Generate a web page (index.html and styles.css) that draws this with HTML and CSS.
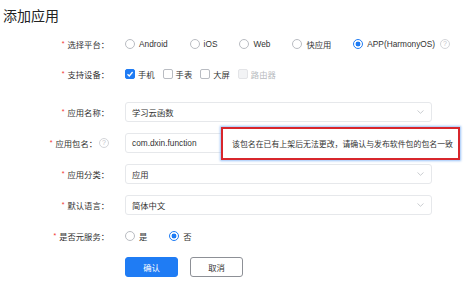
FILE: index.html
```html
<!DOCTYPE html>
<html lang="zh-CN">
<head>
<meta charset="utf-8">
<link rel="stylesheet" href="styles.css">
</head>
<body>
<h1 class="title">添加应用</h1>
<div class="form">
  <div class="row r1">
    <div class="label"><span class="req">*</span>选择平台：</div>
    <div class="control">
      <span class="radio"><span class="circle"></span>Android</span>
      <span class="radio"><span class="circle"></span>iOS</span>
      <span class="radio"><span class="circle"></span>Web</span>
      <span class="radio"><span class="circle"></span>快应用</span>
      <span class="radio on"><span class="circle"></span>APP(HarmonyOS)</span>
      <span class="help">?</span>
    </div>
  </div>
  <div class="row r2">
    <div class="label"><span class="req">*</span>支持设备：</div>
    <div class="control">
      <span class="check on"><span class="box"><svg width="8" height="8" viewBox="0 0 8 8"><polyline points="1.5,4.2 3.3,6 6.6,2" fill="none" stroke="#fff" stroke-width="1.3"/></svg></span>手机</span>
      <span class="check"><span class="box"></span>手表</span>
      <span class="check"><span class="box"></span>大屏</span>
      <span class="check off"><span class="box"></span>路由器</span>
    </div>
  </div>
  <div class="row">
    <div class="label"><span class="req">*</span>应用名称：</div>
    <div class="control">
      <div class="input"><span>学习云函数</span><svg class="chev" width="7" height="4" viewBox="0 0 7 4"><polyline points="0.5,0.5 3.5,3.3 6.5,0.5" fill="none" stroke="#c4c7cc" stroke-width="0.9"/></svg></div>
    </div>
  </div>
  <div class="row">
    <div class="label"><span class="req">*</span>应用包名：<span class="help lbl">?</span></div>
    <div class="control">
      <div class="input"><span>com.dxin.function</span></div>
    </div>
    <div class="tip">该包名在已有上架后无法更改，请确认与发布软件包的包名一致</div>
  </div>
  <div class="row">
    <div class="label"><span class="req">*</span>应用分类：</div>
    <div class="control">
      <div class="input"><span>应用</span><svg class="chev" width="7" height="4" viewBox="0 0 7 4"><polyline points="0.5,0.5 3.5,3.3 6.5,0.5" fill="none" stroke="#c4c7cc" stroke-width="0.9"/></svg></div>
    </div>
  </div>
  <div class="row">
    <div class="label"><span class="req">*</span>默认语言：</div>
    <div class="control">
      <div class="input"><span>简体中文</span><svg class="chev" width="7" height="4" viewBox="0 0 7 4"><polyline points="0.5,0.5 3.5,3.3 6.5,0.5" fill="none" stroke="#c4c7cc" stroke-width="0.9"/></svg></div>
    </div>
  </div>
  <div class="row">
    <div class="label"><span class="req">*</span>是否元服务：</div>
    <div class="control">
      <span class="radio"><span class="circle"></span>是</span>
      <span class="radio on"><span class="circle"></span>否</span>
    </div>
  </div>
  <div class="row">
    <div class="label"></div>
    <div class="control">
      <button class="btn primary">确认</button>
      <button class="btn">取消</button>
    </div>
  </div>
</div>
</body>
</html>
```
FILE: styles.css
```css
html, body {
  margin: 0;
  background: #fff;
}
body {
  width: 474px;
  height: 287px;
  overflow: hidden;
  font-family: "Liberation Sans", "Noto Sans CJK SC", sans-serif;
  color: #333;
}
.title {
  margin: 0;
  padding: 7px 0 0 3px;
  font-size: 14px;
  line-height: 18px;
  font-weight: normal;
  color: #222;
}
.form {
  margin-top: 9px;
  font-size: 8.3px;
}
.row {
  position: relative;
  display: flex;
  align-items: center;
  height: 20px;
  margin-bottom: 11px;
}
.row.r1 { margin-bottom: 10px; }
.row.r2 { margin-bottom: 18px; }
.label {
  flex: none;
  width: 109px;
  display: flex;
  justify-content: flex-end;
  align-items: center;
  color: #333;
}
.req {
  color: #f23030;
  margin-right: 3px;
  font-size: 7px;
  position: relative;
  top: -1px;
}
.control {
  margin-left: 16px;
  display: flex;
  align-items: center;
}
.radio {
  display: flex;
  align-items: center;
  margin-right: 22px;
}
.circle {
  width: 10px;
  height: 10px;
  box-sizing: border-box;
  border: 1px solid #b9bcc2;
  border-radius: 50%;
  margin-right: 4px;
  background: #fff;
}
.radio.on .circle {
  border-color: #1f7cf4;
  background: radial-gradient(circle, #1f7cf4 0 2.2px, #fff 2.7px);
}
.help {
  width: 10px;
  height: 10px;
  box-sizing: border-box;
  border: 1px solid #d3d5d9;
  border-radius: 50%;
  color: #c4c6ca;
  font-size: 7px;
  line-height: 8px;
  text-align: center;
  margin-left: -17px;
}
.help.lbl {
  margin-left: 2px;
}
.check {
  display: flex;
  align-items: center;
  margin-right: 8px;
}
.box {
  width: 10px;
  height: 10px;
  box-sizing: border-box;
  border: 1px solid #b9bcc2;
  border-radius: 2px;
  margin-right: 3px;
  display: flex;
  align-items: center;
  justify-content: center;
}
.check.on .box {
  background: #1f7cf4;
  border-color: #1f7cf4;
}
.check.off .box {
  background: #f2f3f5;
  border-color: #e3e4e7;
}
.check.off {
  color: #b8bbc0;
}
.input {
  width: 307px;
  height: 20px;
  box-sizing: border-box;
  border: 1px solid #e6e8eb;
  border-radius: 3px;
  padding: 0 7px 0 6px;
  display: flex;
  align-items: center;
  justify-content: space-between;
  color: #333;
}
.tip {
  position: absolute;
  left: 221px;
  top: -6px;
  width: 239px;
  height: 33px;
  box-sizing: border-box;
  border: 2px solid #d8262c;
  background: #fff;
  box-shadow: 0 0 2px 1px rgba(120, 175, 245, 0.75);
  padding-left: 9px;
  display: flex;
  align-items: center;
  font-size: 7.9px;
  color: #333;
}
.btn {
  width: 53px;
  height: 20px;
  box-sizing: border-box;
  border-radius: 3px;
  border: 1px solid #8d9096;
  background: #fff;
  color: #333;
  font-family: inherit;
  font-size: 8.3px;
  padding: 0;
  margin-right: 12px;
}
.btn.primary {
  background: #1f7cf4;
  border-color: #1f7cf4;
  color: #fff;
}
```
